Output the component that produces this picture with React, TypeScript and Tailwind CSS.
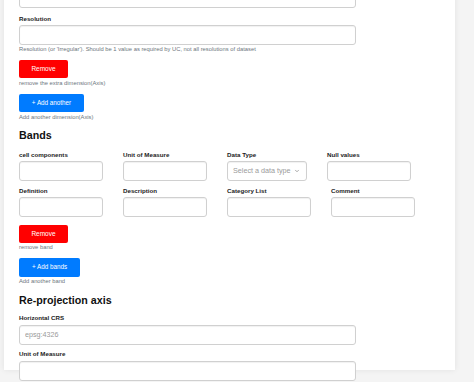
import { ChevronDown } from 'lucide-react'

const inputCls =
  'block h-[20px] w-full rounded-[3px] border border-[#d0d0d0] bg-white px-[5px] text-[7.2px] text-[#333] shadow-[inset_0_1px_1px_rgba(0,0,0,0.06)] outline-none placeholder:text-[#9a9a9a]'

function Label({ children }: { children: React.ReactNode }) {
  return <label className="mb-[3.5px] block text-[6.2px] font-bold leading-[7px] text-[#222]">{children}</label>
}

function Help({ children, className = '' }: { children: React.ReactNode; className?: string }) {
  return <p className={`whitespace-nowrap text-[5.8px] leading-[6px] text-[#6c757d] ${className}`}>{children}</p>
}

function SmallField({ label }: { label: string }) {
  return (
    <div className="w-[84px]">
      <Label>{label}</Label>
      <input className={inputCls} />
    </div>
  )
}

export default function App() {
  return (
    <div className="h-[382px] overflow-hidden bg-[#f4f4f4] font-['Liberation_Sans',Arial,sans-serif]">
      <div className="ml-[4px] h-full w-[451px] bg-white pl-[15px] shadow-[0_0_6px_rgba(0,0,0,0.08)]">
        <div className="-mt-[12px] w-[337px]">
          <input className={inputCls} />
        </div>

        {/* Resolution */}
        <div className="mt-[6.5px] w-[337px]">
          <Label>Resolution</Label>
          <input className={inputCls} />
        </div>
        <Help className="mt-[1px]">
          Resolution (or 'Irregular'). Should be 1 value as required by UC, not all resolutions of dataset
        </Help>

        <button className="mt-[8px] block h-[18px] w-[49px] rounded-[2px] bg-[#ff0000] text-[6.5px] text-white">
          Remove
        </button>
        <Help className="mt-[2px]">remove the extra dimension(Axis)</Help>

        <button className="mt-[8px] block h-[18px] w-[65px] rounded-[2px] bg-[#007bff] text-[6.3px] text-white">
          + Add another
        </button>
        <Help className="mt-[2px]">Add another dimension(Axis)</Help>

        {/* Bands */}
        <h2 className="mt-[9px] text-[10.7px] font-bold leading-[12px] text-[#111]">Bands</h2>

        <div className="mt-[9.5px] flex gap-x-[20px]">
          <SmallField label="cell components" />
          <SmallField label="Unit of Measure" />
          <div className="w-[80px]">
            <Label>Data Type</Label>
            <div className="flex h-[20px] w-full items-center justify-between rounded-[3px] border border-[#d0d0d0] bg-white pl-[5px] pr-[6px] shadow-[inset_0_1px_1px_rgba(0,0,0,0.06)]">
              <span className="whitespace-nowrap text-[7.2px] text-[#9a9a9a]">Select a data type</span>
              <ChevronDown className="h-[6px] w-[6px] shrink-0 text-[#777]" strokeWidth={2.5} />
            </div>
          </div>
          <SmallField label="Null values" />
        </div>

        <div className="mt-[5.5px] flex gap-x-[20px]">
          <SmallField label="Definition" />
          <SmallField label="Description" />
          <SmallField label="Category List" />
          <SmallField label="Comment" />
        </div>

        <button className="mt-[7.5px] block h-[18px] w-[49px] rounded-[2px] bg-[#ff0000] text-[6.5px] text-white">
          Remove
        </button>
        <Help className="mt-[1px]">remove band</Help>

        <button className="mt-[8px] block h-[19px] w-[61px] rounded-[2px] bg-[#007bff] text-[6.3px] text-white">
          + Add bands
        </button>
        <Help className="mt-[1px]">Add another band</Help>

        {/* Re-projection axis */}
        <h2 className="mt-[10px] text-[10.7px] font-bold leading-[12px] text-[#111]">Re-projection axis</h2>

        <div className="mt-[8.5px] w-[337px]">
          <Label>Horizontal CRS</Label>
          <input className={inputCls} placeholder="epsg:4326" />
        </div>

        <div className="mt-[5.5px] w-[337px]">
          <Label>Unit of Measure</Label>
          <input className={inputCls} />
        </div>
      </div>
    </div>
  )
}
